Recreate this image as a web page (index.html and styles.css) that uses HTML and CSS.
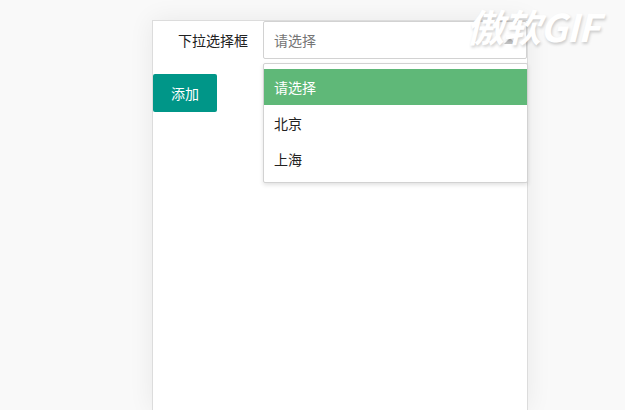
FILE: index.html
```html
<!DOCTYPE html>
<html lang="zh-CN">
<head>
<meta charset="utf-8">
<title>下拉选择框</title>
<link rel="stylesheet" href="styles.css">
</head>
<body>
<div class="page">
  <div class="panel">
    <form class="form">
      <div class="form-item">
        <label class="form-label">下拉选择框</label>
        <div class="input-block">
          <div class="select">
            <div class="select-title">
              <span class="placeholder">请选择</span>
              <i class="edge"></i>
            </div>
            <dl class="options">
              <dd class="option selected">请选择</dd>
              <dd class="option">北京</dd>
              <dd class="option">上海</dd>
            </dl>
          </div>
        </div>
      </div>
      <div class="form-actions">
        <button type="button" class="btn">添加</button>
      </div>
    </form>
  </div>
</div>
<div class="watermark">傲软GIF</div>
</body>
</html>
```
FILE: styles.css
```css
html, body {
  margin: 0;
  padding: 0;
  height: 100%;
}
body {
  background: #f9f9f9;
  font-family: "Noto Sans CJK SC", "Microsoft YaHei", sans-serif;
  font-size: 14px;
  color: #222;
  overflow: hidden;
}
.page {
  padding: 20px 0 0 152px;
  height: 100%;
  box-sizing: border-box;
}
.panel {
  width: 376px;
  height: 100%;
  box-sizing: border-box;
  background: #fff;
  border: 1px solid #dcdcdc;
  border-bottom: none;
  box-shadow: 0 0 24px rgba(0, 0, 0, 0.07);
}
.form {
  margin: 0;
}
.form-item {
  display: flex;
  margin-bottom: 15px;
}
.form-label {
  width: 80px;
  padding: 9px 15px;
  line-height: 20px;
  text-align: right;
  color: #222;
  flex: none;
}
.input-block {
  flex: 1;
  position: relative;
}
.select {
  position: relative;
}
.select-title {
  height: 38px;
  box-sizing: border-box;
  border: 1px solid #d2d2d2;
  border-radius: 2px;
  padding-left: 10px;
  display: flex;
  align-items: center;
  position: relative;
}
.placeholder {
  color: #757575;
  line-height: 20px;
}
.edge {
  position: absolute;
  right: 10px;
  top: 16px;
  width: 0;
  height: 0;
  border-left: 6px solid transparent;
  border-right: 6px solid transparent;
  border-bottom: 6px solid #c2c2c2;
}
.options {
  position: absolute;
  top: 42px;
  left: 0;
  right: -1px;
  margin: 0;
  padding: 5px 0;
  background: #fff;
  border: 1px solid #d2d2d2;
  border-radius: 2px;
  box-shadow: 0 2px 4px rgba(0, 0, 0, 0.12);
  z-index: 5;
}
.option {
  margin: 0;
  padding: 0 10px;
  line-height: 36px;
  height: 36px;
  color: #222;
}
.option.selected {
  background: #5fb878;
  color: #fff;
}
.form-actions {
  display: flex;
}
.btn {
  height: 38px;
  line-height: 38px;
  padding: 0 18px;
  background: #009688;
  color: #fff;
  border: none;
  border-radius: 2px;
  font-family: inherit;
  font-size: 14px;
  cursor: pointer;
}
.watermark {
  position: absolute;
  left: 466px;
  top: 1px;
  padding-right: 8px;
  font-size: 38px;
  font-style: italic;
  font-weight: 700;
  line-height: 50px;
  color: #fff;
  letter-spacing: -1px;
  text-shadow: 1px 2px 3px rgba(0, 0, 0, 0.18);
  z-index: 10;
}
```
